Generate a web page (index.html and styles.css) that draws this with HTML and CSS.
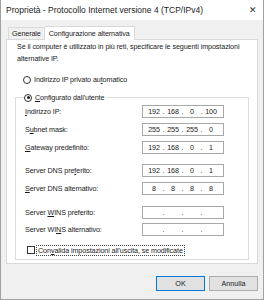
FILE: index.html
```html
<!DOCTYPE html>
<html lang="it">
<head>
  <meta charset="UTF-8">
  <title>Proprietà - Protocollo Internet versione 4 (TCP/IPv4)</title>
  <link rel="stylesheet" href="styles.css">
</head>
<body>
  <div class="window">
    <div class="titlebar">
      <span class="title">Proprietà - Protocollo Internet versione 4 (TCP/IPv4)</span>
      <span class="close">✕</span>
    </div>

    <div class="body">
      <div class="tabs">
        <div class="tab">Generale</div>
        <div class="tab active">Configurazione alternativa</div>
      </div>

      <div class="panel">
        <p class="intro">Se il computer è utilizzato in più reti, specificare le seguenti impostazioni alternative IP.</p>

        <div class="radio-row auto">
          <span class="radio"></span>
          <span>Indirizzo IP privato au<u>t</u>omatico</span>
        </div>

        <div class="group">
          <div class="legend">
            <span class="radio checked"></span>
            <span><u>C</u>onfigurato dall'utente</span>
          </div>

          <div class="row">
            <span class="label"><u>I</u>ndirizzo IP:</span>
            <div class="ip"><span>192</span>.<span>168</span>.<span>0</span>.<span>100</span></div>
          </div>
          <div class="row">
            <span class="label">S<u>u</u>bnet mask:</span>
            <div class="ip"><span>255</span>.<span>255</span>.<span>255</span>.<span>0</span></div>
          </div>
          <div class="row">
            <span class="label"><u>G</u>ateway predefinito:</span>
            <div class="ip"><span>192</span>.<span>168</span>.<span>0</span>.<span>1</span></div>
          </div>

          <div class="row spaced">
            <span class="label">Server DNS pre<u>f</u>erito:</span>
            <div class="ip"><span>192</span>.<span>168</span>.<span>0</span>.<span>1</span></div>
          </div>
          <div class="row">
            <span class="label"><u>S</u>erver DNS alternativo:</span>
            <div class="ip"><span>8</span>.<span>8</span>.<span>8</span>.<span>8</span></div>
          </div>

          <div class="row spaced">
            <span class="label">Server <u>W</u>INS preferito:</span>
            <div class="ip"><span></span>.<span></span>.<span></span>.<span></span></div>
          </div>
          <div class="row">
            <span class="label">Server WI<u>N</u>S alternativo:</span>
            <div class="ip"><span></span>.<span></span>.<span></span>.<span></span></div>
          </div>

          <div class="check-row">
            <span class="checkbox"></span>
            <span class="focus">Con<u>v</u>alida impostazioni all'uscita, se modificate</span>
          </div>
        </div>
      </div>

      <div class="footer">
        <button class="btn default">OK</button>
        <button class="btn">Annulla</button>
      </div>
    </div>
  </div>
</body>
</html>
```

FILE: styles.css
```css
html, body {
  margin: 0;
  padding: 0;
}

body {
  width: 264px;
  height: 300px;
  font-family: 'Liberation Sans', Arial, sans-serif;
  font-size: 7.2px;
  letter-spacing: -0.1px;
  color: #1a1a1a;
  background: #ffffff;
}

.window {
  width: 264px;
  height: 300px;
  box-sizing: border-box;
  border: 1px solid #a0a0a0;
  border-top: none;
  display: flex;
  flex-direction: column;
  background: #f0f0f0;
}

.titlebar {
  height: 20px;
  background: #ffffff;
  display: flex;
  align-items: center;
  justify-content: space-between;
  padding: 0 6px 0 5px;
  flex-shrink: 0;
}

.title {
  font-size: 8.5px;
  letter-spacing: 0;
  color: #222;
}

.close {
  font-size: 9px;
  color: #333;
}

.body {
  flex: 1;
  display: flex;
  flex-direction: column;
  padding: 6px 5px 0 5px;
}

.tabs {
  display: flex;
  align-items: flex-end;
  padding-left: 2px;
  height: 13px;
}

.tab {
  height: 11px;
  line-height: 11px;
  padding: 0 3px;
  border: 1px solid #d9d9d9;
  border-bottom: none;
  background: #f0f0f0;
  color: #222;
}

.tab.active {
  height: 13px;
  line-height: 13px;
  background: #ffffff;
  border-left: none;
  margin-bottom: -1px;
  position: relative;
  padding: 0 4px;
}

.panel {
  height: 225px;
  box-sizing: border-box;
  background: #ffffff;
  border: 1px solid #d9d9d9;
  padding: 1px 8px 0;
}

.intro {
  margin: 0;
  padding-left: 2px;
  line-height: 12px;
  color: #1a1a1a;
}

.radio-row {
  display: flex;
  align-items: center;
  gap: 3px;
  margin: 9px 0 0 8px;
  height: 11px;
}

.radio {
  width: 8px;
  height: 8px;
  border: 1px solid #333;
  border-radius: 50%;
  box-sizing: border-box;
  background: #fff;
  display: inline-block;
  position: relative;
}

.radio.checked::after {
  content: "";
  position: absolute;
  left: 1.5px;
  top: 1.5px;
  width: 3px;
  height: 3px;
  border-radius: 50%;
  background: #222;
}

.group {
  margin-top: 12px;
  border: 1px solid #dcdcdc;
  height: 163px;
  box-sizing: border-box;
  padding: 0 0 0 8px;
}

.legend {
  display: flex;
  align-items: center;
  gap: 3px;
  margin-top: -6px;
  background: #fff;
  width: max-content;
  padding-right: 3px;
  height: 11px;
}

.row {
  display: grid;
  grid-template-columns: 117px 82px;
  align-items: center;
  height: 17.7px;
  margin-left: 1px;
}

.row.spaced {
  margin-top: 6px;
}

.ip {
  width: 82px;
  height: 13px;
  box-sizing: border-box;
  border: 1px solid #a8a8a8;
  display: flex;
  align-items: center;
  justify-content: space-between;
  padding: 0 5px 0 4px;
  color: #222;
}

.ip span {
  width: 14px;
  text-align: center;
}

.check-row {
  display: flex;
  align-items: center;
  gap: 2px;
  margin: 6px 0 0 3px;
  height: 11px;
}

.checkbox {
  width: 8px;
  height: 8px;
  box-sizing: border-box;
  border: 1px solid #333;
  background: #fff;
}

.focus {
  outline: 1px dotted #444;
  padding: 0 1px;
  line-height: 9px;
}

.footer {
  flex: 1;
  display: flex;
  justify-content: flex-end;
  align-items: center;
  gap: 4px;
  padding: 3px 0 0 0;
}

.btn {
  font-family: 'Liberation Sans', Arial, sans-serif;
  font-size: 7.2px;
  width: 49px;
  height: 15px;
  padding: 0;
  background: #e1e1e1;
  border: 1px solid #adadad;
  color: #1a1a1a;
}

.btn.default {
  border-color: #0078d7;
}
```
